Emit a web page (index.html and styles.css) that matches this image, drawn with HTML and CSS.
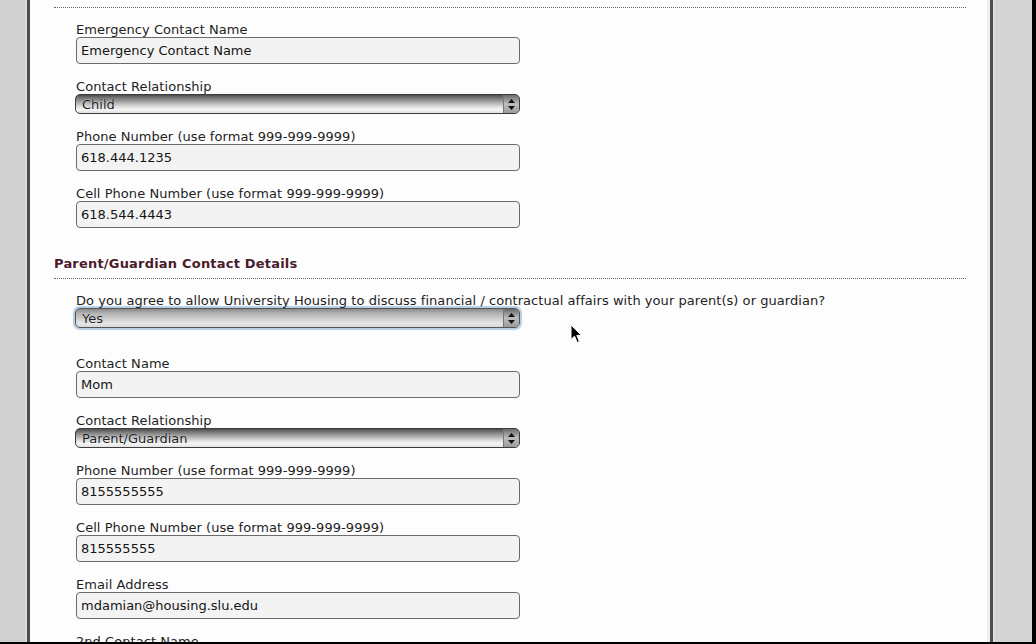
FILE: index.html
```html
<!DOCTYPE html>
<html>
<head>
<meta charset="utf-8">
<link rel="stylesheet" href="styles.css">
</head>
<body>
<div class="screen">
  <div class="side-left"></div>
  <div class="page">
    <h2 class="section-title first">Emergency Contact Details</h2>
    <div class="fields">
      <div class="field">
        <label class="lbl">Emergency Contact Name</label>
        <div class="input">Emergency Contact Name</div>
      </div>
      <div class="field">
        <label class="lbl">Contact Relationship</label>
        <div class="select"><span class="sel-text">Child</span><span class="sel-arrow"><svg width="7" height="11" viewBox="0 0 7 11"><path d="M3.5 0 L7 4 L0 4 Z M0 7 L7 7 L3.5 11 Z" fill="#111"/></svg></span></div>
      </div>
      <div class="field">
        <label class="lbl">Phone Number (use format 999-999-9999)</label>
        <div class="input">618.444.1235</div>
      </div>
      <div class="field">
        <label class="lbl">Cell Phone Number (use format 999-999-9999)</label>
        <div class="input">618.544.4443</div>
      </div>
    </div>

    <h2 class="section-title">Parent/Guardian Contact Details</h2>
    <div class="fields">
      <div class="field field-wide">
        <label class="lbl">Do you agree to allow University Housing to discuss financial / contractual affairs with your parent(s) or guardian?</label>
        <div class="select focused"><span class="sel-text">Yes</span><span class="sel-arrow"><svg width="7" height="11" viewBox="0 0 7 11"><path d="M3.5 0 L7 4 L0 4 Z M0 7 L7 7 L3.5 11 Z" fill="#111"/></svg></span></div>
      </div>
      <div class="field">
        <label class="lbl">Contact Name</label>
        <div class="input">Mom</div>
      </div>
      <div class="field">
        <label class="lbl">Contact Relationship</label>
        <div class="select"><span class="sel-text">Parent/Guardian</span><span class="sel-arrow"><svg width="7" height="11" viewBox="0 0 7 11"><path d="M3.5 0 L7 4 L0 4 Z M0 7 L7 7 L3.5 11 Z" fill="#111"/></svg></span></div>
      </div>
      <div class="field">
        <label class="lbl">Phone Number (use format 999-999-9999)</label>
        <div class="input">8155555555</div>
      </div>
      <div class="field">
        <label class="lbl">Cell Phone Number (use format 999-999-9999)</label>
        <div class="input">815555555</div>
      </div>
      <div class="field">
        <label class="lbl">Email Address</label>
        <div class="input">mdamian@housing.slu.edu</div>
      </div>
      <div class="field">
        <label class="lbl">2nd Contact Name</label>
        <div class="input"></div>
      </div>
    </div>

    <svg class="cursor" width="13" height="20" viewBox="0 0 13 20"><path d="M1 1 L1 15.5 L4.5 12.2 L7.2 18.5 L9.4 17.6 L6.8 11.4 L11.5 11.4 Z" fill="#000" stroke="#fff" stroke-width="1" stroke-linejoin="round"/></svg>
  </div>
  <div class="side-right"></div>
</div>
</body>
</html>
```

FILE: styles.css
```css
html, body {
  margin: 0;
  padding: 0;
  width: 1036px;
  height: 644px;
  overflow: hidden;
  background: #000;
}

.screen {
  display: flex;
  width: 1032px;
  height: 642px;
  overflow: hidden;
  background: #d3d3d3;
  font-family: "DejaVu Sans", Verdana, sans-serif;
}

.side-left {
  width: 25px;
  border-right: 2px solid #dcdcdc;
  background: #d0d0d0;
}

.page {
  position: relative;
  box-sizing: border-box;
  width: 966px;
  border-left: 3px solid #4e4e4e;
  border-right: 3px solid #4e4e4e;
  background: #fdfdfd;
  padding: 0 24px;
  box-shadow: inset -3px 0 0 #f0f0f0;
}

.side-right {
  flex: 1;
  border-left: 2px solid #dedede;
  background: #d4d4d4;
}

.section-title {
  margin: 28px 0 0 0;
  font-size: 13px;
  font-weight: bold;
  line-height: 16px;
  color: #4a1b2b;
  padding-bottom: 6px;
  border-bottom: 1px dotted #666;
  letter-spacing: 0.2px;
}

.section-title.first {
  margin-top: -15px;
}

.fields {
  padding: 13px 0 0 22px;
}

.field {
  margin-bottom: 14px;
}

.field-wide {
  margin-bottom: 27px;
}

.lbl {
  display: block;
  font-size: 13px;
  line-height: 18px;
  margin-bottom: -2px;
  letter-spacing: 0.05px;
  color: #1e1e1e;
  white-space: nowrap;
}

.input {
  box-sizing: border-box;
  width: 444px;
  height: 27px;
  border: 1px solid #6b6b6b;
  border-radius: 4px;
  background: #f3f3f3;
  padding-left: 4px;
  font-size: 13px;
  line-height: 26px;
  color: #141414;
}

.select {
  box-sizing: border-box;
  display: flex;
  width: 445px;
  height: 20px;
  margin-left: -1px;
  border: 1px solid #3c3c3c;
  border-radius: 5px;
  background: linear-gradient(to bottom, #4c4c4c 0%, #7a7a7a 18%, #a9a9a9 40%, #d9d9d9 62%, #f6f6f6 80%, #e2e2e2 100%);
  overflow: hidden;
}

.select.focused {
  background: linear-gradient(to bottom, #8a8a8a 0%, #b4b4b4 25%, #cfcfcf 55%, #e6e6e6 80%, #d8d8d8 100%);
  border-color: #555;
  box-shadow: 0 0 1px 2px #b7cde3;
}

.sel-text {
  flex: 1;
  padding-left: 6px;
  font-size: 13px;
  line-height: 19px;
  color: #1a1a1a;
  text-shadow: 0 0 1px #fff;
}

.sel-arrow {
  width: 15px;
  border-left: 1px solid #777;
  display: flex;
  align-items: center;
  justify-content: center;
  background: linear-gradient(to bottom, #6a6a6a 0%, #bdbdbd 50%, #9a9a9a 100%);
}

.cursor {
  position: absolute;
  left: 540px;
  top: 324px;
}
```
